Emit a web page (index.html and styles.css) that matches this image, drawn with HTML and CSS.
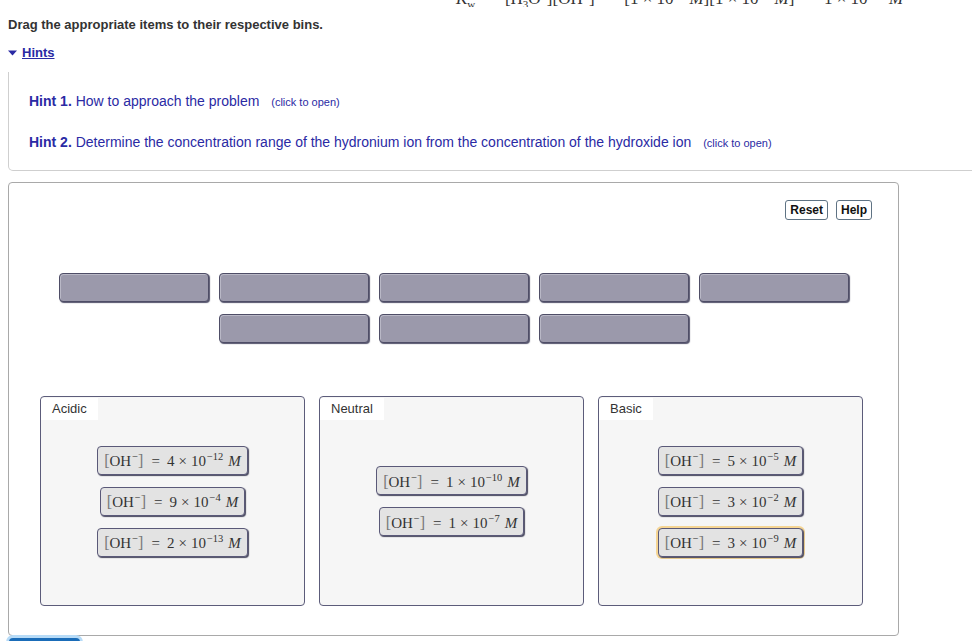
FILE: index.html
```html
<!DOCTYPE html>
<html>
<head>
<meta charset="utf-8">
<link rel="stylesheet" href="styles.css">
</head>
<body>
<div class="formula"><span class="fline"><i>K</i><sub>w</sub><span class="eq">=</span>[H<sub>3</sub>O<sup>+</sup>][OH<sup>−</sup>]<span class="eq">=</span>[1 × 10<sup>−7</sup> <i>M</i>][1 × 10<sup>−7</sup> <i>M</i>]<span class="eq">=</span>1 × 10<sup>−14</sup> <i>M</i><sup>2</sup></span></div>

<p class="instr">Drag the appropriate items to their respective bins.</p>

<div class="hints-toggle">
  <svg class="tri" width="9" height="6" viewBox="0 0 9 6"><path d="M0 0.5 H9 L4.5 5.5 Z" fill="#2a2aa4"/></svg>
  <a class="hints-link" href="#">Hints</a>
</div>

<div class="hint-box">
  <div class="hint"><b>Hint 1.</b> How to approach the problem <span class="open">(click to open)</span></div>
  <div class="hint"><b>Hint 2.</b> Determine the concentration range of the hydronium ion from the concentration of the hydroxide ion <span class="open">(click to open)</span></div>
</div>

<div class="dnd">
  <div class="tools">
    <button class="tbtn">Reset</button>
    <button class="tbtn">Help</button>
  </div>
  <div class="tiles">
    <div class="tile"></div><div class="tile"></div><div class="tile"></div><div class="tile"></div><div class="tile"></div>
    <div class="tile"></div><div class="tile"></div><div class="tile"></div>
  </div>
  <div class="bins">
    <div class="bin">
      <div class="bin-label">Acidic</div>
      <div class="item"><span class="m"><span class="br">[</span>OH<sup>−</sup><span class="br">]</span><span class="eq">=</span>4<span class="x">×</span>10<sup>−12</sup><i class="u">M</i></span></div>
      <div class="item"><span class="m"><span class="br">[</span>OH<sup>−</sup><span class="br">]</span><span class="eq">=</span>9<span class="x">×</span>10<sup>−4</sup><i class="u">M</i></span></div>
      <div class="item"><span class="m"><span class="br">[</span>OH<sup>−</sup><span class="br">]</span><span class="eq">=</span>2<span class="x">×</span>10<sup>−13</sup><i class="u">M</i></span></div>
    </div>
    <div class="bin">
      <div class="bin-label">Neutral</div>
      <div class="item"><span class="m"><span class="br">[</span>OH<sup>−</sup><span class="br">]</span><span class="eq">=</span>1<span class="x">×</span>10<sup>−10</sup><i class="u">M</i></span></div>
      <div class="item"><span class="m"><span class="br">[</span>OH<sup>−</sup><span class="br">]</span><span class="eq">=</span>1<span class="x">×</span>10<sup>−7</sup><i class="u">M</i></span></div>
    </div>
    <div class="bin">
      <div class="bin-label">Basic</div>
      <div class="item"><span class="m"><span class="br">[</span>OH<sup>−</sup><span class="br">]</span><span class="eq">=</span>5<span class="x">×</span>10<sup>−5</sup><i class="u">M</i></span></div>
      <div class="item"><span class="m"><span class="br">[</span>OH<sup>−</sup><span class="br">]</span><span class="eq">=</span>3<span class="x">×</span>10<sup>−2</sup><i class="u">M</i></span></div>
      <div class="item item-focus"><span class="m"><span class="br">[</span>OH<sup>−</sup><span class="br">]</span><span class="eq">=</span>3<span class="x">×</span>10<sup>−9</sup><i class="u">M</i></span></div>
    </div>
  </div>
</div>

<button class="submit">Submit</button>
</body>
</html>
```

FILE: styles.css
```css
html, body {
  margin: 0;
  padding: 0;
  background: #ffffff;
}
body {
  font-family: "Liberation Sans", Arial, sans-serif;
  color: #333333;
  overflow: hidden;
}

.formula {
  height: 7px;
  overflow: hidden;
  display: flex;
  align-items: flex-end;
  padding-left: 456px;
  font-family: "Liberation Serif", "DejaVu Serif", serif;
  font-size: 17px;
  color: #333;
}
.fline {
  line-height: 17px;
  white-space: nowrap;
}
.fline sub, .fline sup {
  font-size: 11px;
  line-height: 0;
}
.fline .eq {
  margin: 0 10px;
}

.instr {
  margin: 10px 0 0 8px;
  font-size: 13px;
  line-height: 15px;
  font-weight: bold;
  color: #333333;
}

.hints-toggle {
  margin: 13px 0 0 8px;
  display: flex;
  align-items: center;
  gap: 5px;
  font-size: 13px;
  line-height: 15px;
}
.tri {
  display: block;
}
.hints-link {
  color: #2a2aa4;
  font-weight: bold;
  text-decoration: underline;
}

.hint-box {
  margin: 12px -10px 0 8px;
  border: 1px solid #cfcfcf;
  border-top: none;
  border-radius: 0 0 0 5px;
  padding: 21px 20px 19px 20px;
  display: flex;
  flex-direction: column;
  gap: 24px;
}
.hint {
  font-size: 14px;
  line-height: 16px;
  color: #2a2aa4;
  white-space: nowrap;
}
.hint b {
  font-weight: bold;
}
.hint .open {
  font-size: 11px;
  margin-left: 8px;
}

.dnd {
  margin: 11px 0 0 8px;
  width: 891px;
  height: 454px;
  box-sizing: border-box;
  border: 1px solid #a9a9a9;
  border-radius: 4px;
  padding-top: 17px;
}
.tools {
  display: flex;
  justify-content: flex-end;
  gap: 8px;
  padding-right: 26px;
}
.tbtn {
  font-family: "Liberation Sans", Arial, sans-serif;
  font-weight: bold;
  font-size: 12px;
  color: #111;
  background: #ffffff;
  border: 1px solid #5f7384;
  border-radius: 3px;
  height: 20px;
  padding: 0 4px;
  line-height: 18px;
}

.tiles {
  margin: 53px auto 0;
  width: 800px;
  display: flex;
  flex-wrap: wrap;
  justify-content: center;
  column-gap: 10px;
  row-gap: 12px;
}
.tile {
  width: 150px;
  height: 29px;
  box-sizing: border-box;
  background: #9b99ab;
  border: 1px solid #4e4d66;
  border-radius: 4px;
  box-shadow: 1px 1px 1px #55546c, inset 1px 1px 0 #b9b8c6;
}

.bins {
  margin-top: 53px;
  display: flex;
  justify-content: center;
  gap: 14px;
  padding-right: 4px;
}
.bin {
  position: relative;
  width: 265px;
  height: 210px;
  box-sizing: border-box;
  background: #f6f6f6;
  border: 1px solid #5c5c7a;
  border-radius: 4px;
  display: flex;
  flex-direction: column;
  align-items: center;
  justify-content: center;
  gap: 12px;
}
.bin-label {
  position: absolute;
  top: 1px;
  left: 0;
  background: #ffffff;
  font-size: 13px;
  line-height: 22px;
  padding: 0 11px;
  color: #333;
  border-radius: 3px 0 0 0;
}

.item {
  height: 29px;
  box-sizing: border-box;
  padding: 0 6px;
  background: #e3e3e3;
  border: 1px solid #5a5978;
  border-radius: 4px;
  box-shadow: 1px 1px 1px #4a4a60;
  display: flex;
  align-items: center;
  font-family: "Liberation Serif", "DejaVu Serif", serif;
  font-size: 15px;
  color: #333;
  white-space: nowrap;
}
.m {
  display: block;
  line-height: 20px;
  padding-top: 2px;
}
.item sup {
  font-size: 10.5px;
  line-height: 0;
  vertical-align: 6px;
  padding-left: 1px;
}
.item .br {
  color: #777;
  font-size: 16px;
}
.item .eq {
  margin: 0 7px 0 8px;
}
.item .x {
  margin: 0 4px;
}
.item .u {
  margin-left: 5px;
}
.item-focus {
  box-shadow: 1px 1px 1px #4a4a60, 0 0 0 2px #f6d593;
}

.submit {
  display: block;
  margin: 2px 0 0 9px;
  width: 71px;
  height: 30px;
  background: #1a6cb8;
  color: #fff;
  border: none;
  border-radius: 4px;
  box-shadow: 0 0 0 3px #b7dbf7;
  font-family: "Liberation Sans", Arial, sans-serif;
  font-size: 13px;
}
```
